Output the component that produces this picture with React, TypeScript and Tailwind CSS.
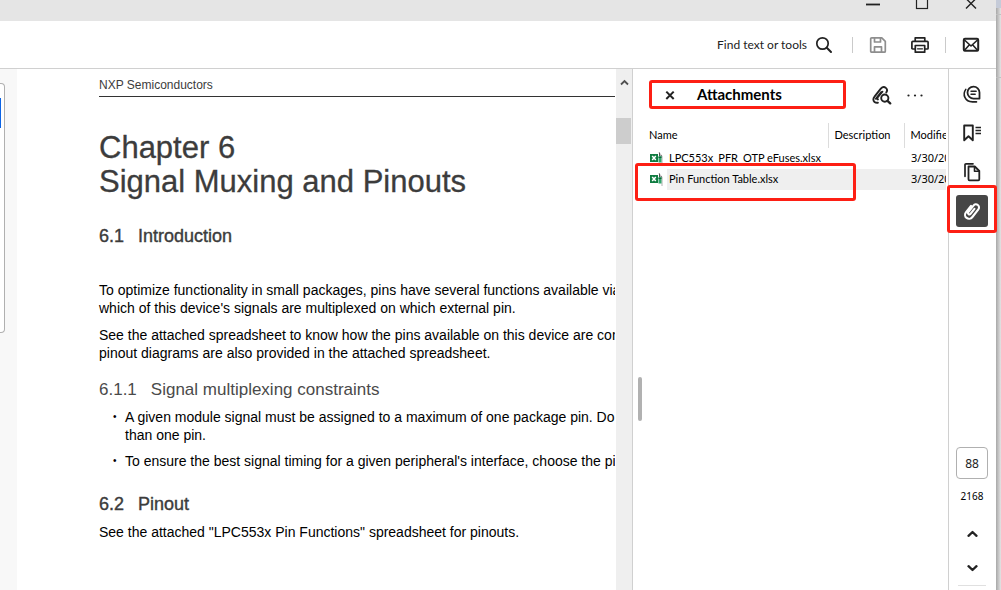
import type { ReactNode } from "react";

function Svg({ size = 20, children }: { size?: number; children: ReactNode }) {
  return (
    <svg
      width={size}
      height={size}
      viewBox={`0 0 ${size} ${size}`}
      fill="none"
      stroke="currentColor"
      strokeWidth="1.7"
      strokeLinecap="round"
      strokeLinejoin="round"
      aria-hidden="true"
    >
      {children}
    </svg>
  );
}

const MinimizeIcon = () => (
  <Svg size={16}>
    <path d="M1 8.5h14" strokeWidth="1.8" strokeLinecap="butt" />
  </Svg>
);
const MaximizeIcon = () => (
  <Svg size={16}>
    <rect x="2.500" y="1.500" width="11" height="11" strokeWidth="1.200" strokeLinejoin="miter" />
  </Svg>
);
const WindowCloseIcon = () => (
  <Svg size={16}>
    <path d="M3 2.500l10 10M13 2.500l-10 10" strokeWidth="1.400" strokeLinecap="butt" />
  </Svg>
);
const SearchIcon = () => (
  <Svg>
    <circle cx="8.500" cy="8.500" r="5.700" />
    <path d="M12.800 12.800L17 17" strokeWidth="2" />
  </Svg>
);
const SaveIcon = () => (
  <Svg>
    <path d="M3.700 2.800h10.100l3.500 3.500v9.900a1 1 0 0 1-1 1H3.700a1 1 0 0 1-1-1V3.800a1 1 0 0 1 1-1z" />
    <path d="M6.500 3v4h6V3M6.500 17v-5.200h7V17" />
  </Svg>
);
const PrinterIcon = () => (
  <Svg>
    <path d="M5.200 6V2.800h9.600V6" />
    <path d="M5 14H2.700a.8.8 0 0 1-.8-.8V7.300c0-.6.400-1 1-1h14.200c.6 0 1 .4 1 1v5.900a.8.8 0 0 1-.8.8H15" />
    <path d="M5.300 10.500h9.400v6.700H5.300z" />
    <path d="M7.500 13.800h5" strokeWidth="1.200" />
  </Svg>
);
const MailIcon = () => (
  <Svg>
    <rect x="2.800" y="3.800" width="14.400" height="12" rx="1.200" strokeWidth="2" />
    <path d="M3.500 5l6.500 6 6.500-6M3.500 15.300l4.500-5M16.500 15.300l-4.500-5" strokeWidth="1.600" />
  </Svg>
);
const ClipIcon = () => (
  <Svg>
    <path
      transform="rotate(38 10 10)"
      d="M6 6.500v8.300a4 4 0 0 0 8 0V4.800a3.100 3.100 0 0 0-6.200 0v8.400a1.300 1.300 0 0 0 2.800 0V6.800"
      strokeWidth="2.100"
    />
  </Svg>
);
const ClipSearchIcon = () => (
  <Svg>
    <path
      d="M5.900 17.700c-2.800.4-4.700-1.200-4.500-3.600.1-1 .5-1.800 1.100-2.500L8.800 3.700c1.500-1.700 3.600-2 5-.8s1.600 3 .5 4.500M10.400 6.700L6 12c-.8 1-.8 2-.1 2.500M3.900 13.800L9.200 7.200"
      strokeWidth="1.900"
    />
    <circle cx="12.800" cy="13.100" r="3.600" strokeWidth="1.900" />
    <path d="M15.500 15.900l2.700 2.500" strokeWidth="2.300" />
  </Svg>
);
const MoreIcon = () => (
  <Svg>
    <g fill="currentColor" stroke="none">
      <circle cx="3.500" cy="10.500" r="1.100" />
      <circle cx="10" cy="10.500" r="1.100" />
      <circle cx="16.500" cy="10.500" r="1.100" />
    </g>
  </Svg>
);
const CloseIcon = () => (
  <Svg size={12}>
    <path d="M2.300 2.600l7.400 7.400M9.700 2.600l-7.400 7.400" strokeWidth="2" strokeLinecap="butt" />
  </Svg>
);
const CommentsIcon = () => (
  <Svg>
    <path d="M17.500 14.600h-5.800a6 6 0 1 1 5.800-6z" strokeWidth="1.800" />
    <path d="M9 7.200h5.200M9 10.300h4.200" strokeWidth="1.400" />
    <path d="M3.800 5.400c-3.500 4.800-1 12.400 6.600 12.500h4.100" strokeWidth="1.600" />
  </Svg>
);
const BookmarkIcon = () => (
  <Svg>
    <path d="M2.200 2.500h8.600v14.800L6.500 13.200l-4.300 4.100z" strokeWidth="1.900" />
    <path d="M13.500 4.500h5.500M13.500 7.500h5.500M13.500 10.500h5.500" strokeWidth="1.500" strokeLinecap="butt" />
  </Svg>
);
const PagesIcon = () => (
  <Svg>
    <path d="M6.500 4.500h6.300l4.500 4.500v8.300a1 1 0 0 1-1 1H7.500a1 1 0 0 1-1-1z" strokeWidth="1.800" />
    <path d="M12.500 4.800v4.400h4.500" strokeWidth="1.600" />
    <path d="M3 14.300V2.800c0-.6.400-1 1-1h7" strokeWidth="1.700" />
  </Svg>
);
const ChevronIcon = ({ down = false }: { down?: boolean }) => (
  <Svg size={12}>
    <path d={down ? "M2.500 4.200l4 3.800 4-3.800" : "M2.500 7.800l4-3.800 4 3.800"} strokeWidth="2.300" />
  </Svg>
);
const SheetIcon = () => (
  <svg width="15" height="16" viewBox="0 0 15 16" aria-hidden="true">
    <path d="M10 1.500l3 3.500v9" fill="none" stroke="#b0b0b0" strokeWidth="1" />
    <path d="M10.500 1.500V5H13" fill="none" stroke="#555" strokeWidth="1" />
    <path d="M9.500 5h3v6.500h-3z" fill="#2fa56b" />
    <path d="M9.500 6.500h3" stroke="#175c38" strokeWidth="1" />
    <rect x="1" y="3" width="8" height="8" fill="#107c41" />
    <path d="M3.200 5l3.600 4M6.800 5L3.200 9" stroke="#fff" strokeWidth="1.500" />
  </svg>
);

const files = [
  { name: "LPC553x_PFR_OTP eFuses.xlsx", date: "3/30/20", selected: false },
  { name: "Pin Function Table.xlsx", date: "3/30/20", selected: true },
];

function TitleBar() {
  return (
    <header className="flex h-[21px] shrink-0 items-start justify-end gap-[33px] overflow-hidden bg-[#e5e5e5] pr-[17px] text-[#222222]">
      <button aria-label="Minimize" className="-mt-1">
        <MinimizeIcon />
      </button>
      <button aria-label="Maximize" className="-mt-1">
        <MaximizeIcon />
      </button>
      <button aria-label="Close" className="-mt-1">
        <WindowCloseIcon />
      </button>
    </header>
  );
}

function Toolbar() {
  return (
    <div className="flex h-12 shrink-0 items-center justify-end border-b border-[#d0d0d0] pr-[15px] text-[#222222]">
      <button className="flex items-center gap-[7px] text-[12px] [font-family:Lato,'Open_Sans',sans-serif]">
        Find text or tools
        <SearchIcon />
      </button>
      <span className="mr-[15px] ml-[18px] h-4 w-px bg-[#cacaca]" />
      <button aria-label="Save" className="mr-[22px] text-[#8e8e8e]">
        <SaveIcon />
      </button>
      <button aria-label="Print">
        <PrinterIcon />
      </button>
      <span className="mx-[15px] h-4 w-px bg-[#cacaca]" />
      <button aria-label="Email">
        <MailIcon />
      </button>
    </div>
  );
}

function DocumentPage() {
  return (
    <article className="mr-px min-w-0 flex-1 overflow-hidden pl-[82px] text-[14px] leading-[18px] whitespace-nowrap text-black [font-family:'Liberation_Sans',Arial,sans-serif]">
      <p className="border-b border-[#333333] pt-[7px] pb-[2px] text-[12px] text-[#3c3c3c]">NXP Semiconductors</p>
      <h1 className="mt-[34px] text-[31px] leading-[34px] text-[#3c3c3c] [-webkit-text-stroke:0.3px_#3c3c3c]">
        Chapter 6<br />
        Signal Muxing and Pinouts
      </h1>
      <h2 className="mt-[27px] flex gap-[14px] text-[18px] leading-5 text-[#3c3c3c] [-webkit-text-stroke:0.4px_#3c3c3c]">
        <span>6.1</span>
        <span>Introduction</span>
      </h2>
      <p className="mt-[35px]">
        To optimize functionality in small packages, pins have several functions available via s<br />
        which of this device's signals are multiplexed on which external pin.
      </p>
      <p className="mt-[9px]">
        See the attached spreadsheet to know how the pins available on this device are config
        <br />
        pinout diagrams are also provided in the attached spreadsheet.
      </p>
      <h3 className="mt-[18px] flex gap-[14px] text-[17px] leading-5 text-[#4a4a4a]">
        <span>6.1.1</span>
        <span>Signal multiplexing constraints</span>
      </h3>
      <ul className="mt-2 flex flex-col gap-2">
        <li className="flex">
          <span className="w-[26px] shrink-0 pl-[14px] text-[10px]">•</span>
          <span>
            A given module signal must be assigned to a maximum of one package pin. Do n<br />
            than one pin.
          </span>
        </li>
        <li className="flex">
          <span className="w-[26px] shrink-0 pl-[14px] text-[10px]">•</span>
          <span>To ensure the best signal timing for a given peripheral's interface, choose the pin</span>
        </li>
      </ul>
      <h2 className="mt-6 flex gap-[14px] text-[18px] leading-5 text-[#3c3c3c] [-webkit-text-stroke:0.4px_#3c3c3c]">
        <span>6.2</span>
        <span>Pinout</span>
      </h2>
      <p className="mt-[9px]">See the attached "LPC553x Pin Functions" spreadsheet for pinouts.</p>
    </article>
  );
}

function ScrollBar() {
  return (
    <div className="flex w-4 shrink-0 flex-col bg-[#efefef]">
      <button aria-label="Scroll up" className="flex h-[26px] items-center justify-center text-[#505050]">
        <svg width="9" height="7" viewBox="0 0 9 7" fill="none" stroke="currentColor" strokeWidth="1.800" aria-hidden="true">
          <path d="M1 5.500L4.500 2 8 5.500" />
        </svg>
      </button>
      <div className="mt-[23px] h-[26px] w-[15px] bg-[#cdcdcd]" />
    </div>
  );
}

function AttachmentsPanel() {
  return (
    <aside className="flex w-[317px] shrink-0 border-x border-[#d0d0d0]">
      <div className="w-4 shrink-0 pt-[308px] pl-[5px]">
        <div className="h-11 w-1 rounded-sm bg-[#b1b1b1]" />
      </div>
      <div className="min-w-0 flex-1 pr-[2px] [font-family:Lato,'Open_Sans',sans-serif]">
        <div className="flex items-center pt-[11px]">
          <div className="flex h-[29px] w-[197px] items-center rounded-[3px] border-3 border-[#fd1f14] pl-3">
            <button aria-label="Close attachments" className="text-[#222222]">
              <CloseIcon />
            </button>
            <h2 className="ml-[21px] text-[15px] font-bold text-black">Attachments</h2>
          </div>
          <button aria-label="Search attachments" className="ml-[26px] text-[#222222]">
            <ClipSearchIcon />
          </button>
          <button aria-label="More options" className="ml-[13px] text-[#222222]">
            <MoreIcon />
          </button>
        </div>
        <table className="mt-[14px] w-full table-fixed text-left text-[11px] whitespace-nowrap text-black">
          <thead>
            <tr className="h-[25px]">
              <th className="w-[179px] p-0 font-normal">Name</th>
              <th className="w-[76px] border-l border-[#dcdcdc] p-0 pl-[6px] font-normal">Description</th>
              <th className="overflow-hidden border-l border-[#dcdcdc] p-0 pl-[6px] font-normal">Modified</th>
            </tr>
          </thead>
          <tbody>
            {files.map((file) => (
              <tr key={file.name} className="h-[21px]">
                <td className="p-0">
                  <div className="relative flex h-[21px] items-center">
                    <SheetIcon />
                    <span className={file.selected ? "ml-[3px] flex h-full flex-1 items-center bg-[#efefef] pl-[2px]" : "pl-[5px]"}>
                      {file.name}
                    </span>
                    {file.selected && (
                      <div className="pointer-events-none absolute -top-[6px] -left-[14px] h-[38px] w-[221px] rounded-[3px] border-3 border-[#fd1f14]" />
                    )}
                  </div>
                </td>
                <td className={file.selected ? "bg-[#efefef] p-0" : "p-0"} />
                <td
                  className={
                    file.selected
                      ? "overflow-hidden bg-[#efefef] p-0 pl-[7px] [font-family:'Noto_Sans',sans-serif]"
                      : "overflow-hidden p-0 pl-[7px] [font-family:'Noto_Sans',sans-serif]"
                  }
                >
                  {file.date}
                </td>
              </tr>
            ))}
          </tbody>
        </table>
      </div>
    </aside>
  );
}

const railButton = "flex h-8 w-8 shrink-0 items-center justify-center rounded-[3px]";

function ToolRail() {
  return (
    <nav className="flex w-[47px] shrink-0 flex-col items-center pt-[9px] pr-2 pb-1 pl-[7px] text-[#222222]">
      <div className="flex flex-col gap-[7px]">
        <button aria-label="Comments" className={railButton}>
          <CommentsIcon />
        </button>
        <button aria-label="Bookmarks" className={railButton}>
          <BookmarkIcon />
        </button>
        <button aria-label="Pages" className={railButton}>
          <PagesIcon />
        </button>
        <button aria-label="Attachments" className="relative flex h-8 w-8 items-center justify-center rounded-[3px] bg-[#464646] text-white">
          <ClipIcon />
          <span className="pointer-events-none absolute -top-[10px] -left-[9px] h-12 w-[50px] rounded-[3px] border-3 border-[#fd1f14]" />
        </button>
      </div>
      <input
        aria-label="Current page"
        defaultValue="88"
        className="mt-auto h-8 w-8 rounded-[4px] border border-[#b0b0b0] text-center text-[12px] outline-none"
      />
      <span className="mt-[9px] text-[10px] leading-4 text-black">2168</span>
      <button aria-label="Previous page" className="mt-[18px] flex h-6 w-6 items-center justify-center">
        <ChevronIcon />
      </button>
      <button aria-label="Next page" className="mt-[10px] flex h-6 w-6 items-center justify-center">
        <ChevronIcon down />
      </button>
      <div className="mt-[5px] h-px w-7 shrink-0 bg-[#e0e0e0]" />
    </nav>
  );
}

export default function App() {
  return (
    <div className="flex h-screen overflow-hidden bg-white [font-family:'Noto_Sans','Open_Sans',sans-serif]">
      <div className="flex min-w-0 flex-1 flex-col">
        <TitleBar />
        <Toolbar />
        <main className="flex min-h-0 flex-1">
          <div className="w-[17px] shrink-0 bg-[#f8f8f8] pt-[14px]">
            <div className="h-[250px] w-[5px] rounded-r-[4px] border border-l-0 border-[#b0b0b0] bg-white pt-[14px]">
              <div className="h-[30px] w-px bg-[#0b63e5]" />
            </div>
          </div>
          <DocumentPage />
          <ScrollBar />
          <AttachmentsPanel />
          <ToolRail />
        </main>
      </div>
      <div className="w-[5px] shrink-0 bg-linear-to-r from-[#a8a8a8] to-[#e4e4e4]">
        <div className="h-2 bg-[#c5cbd8]" />
        <div className="mt-[6px] h-px bg-[#c0c0c0]" />
        <div className="mt-[62px] h-px bg-[#c0c0c0]" />
      </div>
    </div>
  );
}
